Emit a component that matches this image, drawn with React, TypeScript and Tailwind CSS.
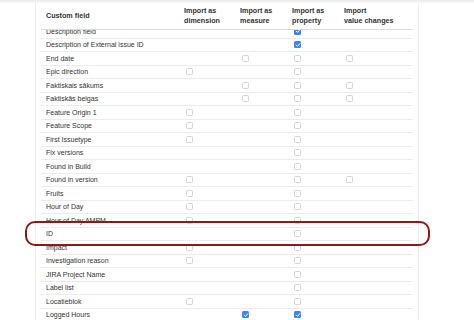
import React from "react";

type Cell = null | boolean;
type Row = { name: string; cells: [Cell, Cell, Cell, Cell] };

const rows: Row[] = [
  { name: "Description field", cells: [null, null, true, null] },
  { name: "Description of External issue ID", cells: [null, null, true, null] },
  { name: "End date", cells: [null, false, false, false] },
  { name: "Epic direction", cells: [false, null, false, null] },
  { name: "Faktiskais sākums", cells: [null, false, false, false] },
  { name: "Faktiskās beigas", cells: [null, false, false, false] },
  { name: "Feature Origin 1", cells: [false, null, false, null] },
  { name: "Feature Scope", cells: [false, null, false, null] },
  { name: "First Issuetype", cells: [false, null, false, null] },
  { name: "Fix versions", cells: [null, null, false, null] },
  { name: "Found in Build", cells: [null, null, false, null] },
  { name: "Found in version", cells: [false, null, false, false] },
  { name: "Fruits", cells: [false, null, false, null] },
  { name: "Hour of Day", cells: [false, null, false, null] },
  { name: "Hour of Day AMPM", cells: [false, null, false, null] },
  { name: "ID", cells: [null, null, false, null] },
  { name: "Impact", cells: [false, null, false, null] },
  { name: "Investigation reason", cells: [false, null, false, null] },
  { name: "JIRA Project Name", cells: [null, null, false, null] },
  { name: "Label list", cells: [null, null, false, null] },
  { name: "Locatieblok", cells: [false, null, false, null] },
  { name: "Logged Hours", cells: [null, true, true, null] },
];

const cols = "grid grid-cols-[143px_56px_52px_52px_68px]";

function Box({ checked }: { checked: boolean }) {
  if (checked) {
    return (
      <span className="ml-[2px] flex h-[7px] w-[7px] items-center justify-center rounded-[1.5px] bg-[#3a86ec]">
        <svg width="6" height="6" viewBox="0 0 6 6">
          <path d="M1.2 3.1 L2.5 4.4 L4.9 1.6" fill="none" stroke="white" strokeWidth="1" strokeLinecap="round" strokeLinejoin="round" />
        </svg>
      </span>
    );
  }
  return <span className="ml-[2px] block h-[7px] w-[7px] rounded-[1.5px] border border-[#d4d4d4] bg-white" />;
}

export default function App() {
  return (
    <div
      className="relative h-[320px] w-[474px] overflow-hidden bg-white text-[#333]"
      style={{ fontFamily: '"Liberation Sans", Arial, sans-serif' }}
    >
      <div className="h-[3px] bg-gradient-to-b from-[#ececec] to-[#f8f8f8]" />
      <div className="ml-[35px] flex h-[317px] w-[384px] flex-col border-x border-[#ededed] px-[5px]">
        {/* header */}
        <div className={`${cols} h-[27px] shrink-0 items-center border-b border-[#dcdcdc] text-[7.2px] font-bold leading-[10px]`}>
          <div className="pl-[5px]">Custom field</div>
          <div>
            Import as
            <br />
            dimension
          </div>
          <div>
            Import as
            <br />
            measure
          </div>
          <div>
            Import as
            <br />
            property
          </div>
          <div>
            Import
            <br />
            value changes
          </div>
        </div>
        {/* scrolled body */}
        <div className="flex-1 overflow-hidden">
          <div className="-mt-[5px]">
            {rows.map((r) => (
              <div
                key={r.name}
                className={`${cols} h-[13.5px] items-center border-b border-[#ececec] text-[7px] leading-[9px]`}
              >
                <div className="whitespace-nowrap pl-[5px]">{r.name}</div>
                {r.cells.map((c, i) => (
                  <div key={i} className="flex items-center">
                    {c === null ? null : <Box checked={c} />}
                  </div>
                ))}
              </div>
            ))}
          </div>
        </div>
      </div>
      {/* highlight around the ID row */}
      <div className="pointer-events-none absolute left-[25px] top-[221px] h-[25px] w-[405px] rounded-[10px] border-2 border-[#8f1717]" />
    </div>
  );
}
